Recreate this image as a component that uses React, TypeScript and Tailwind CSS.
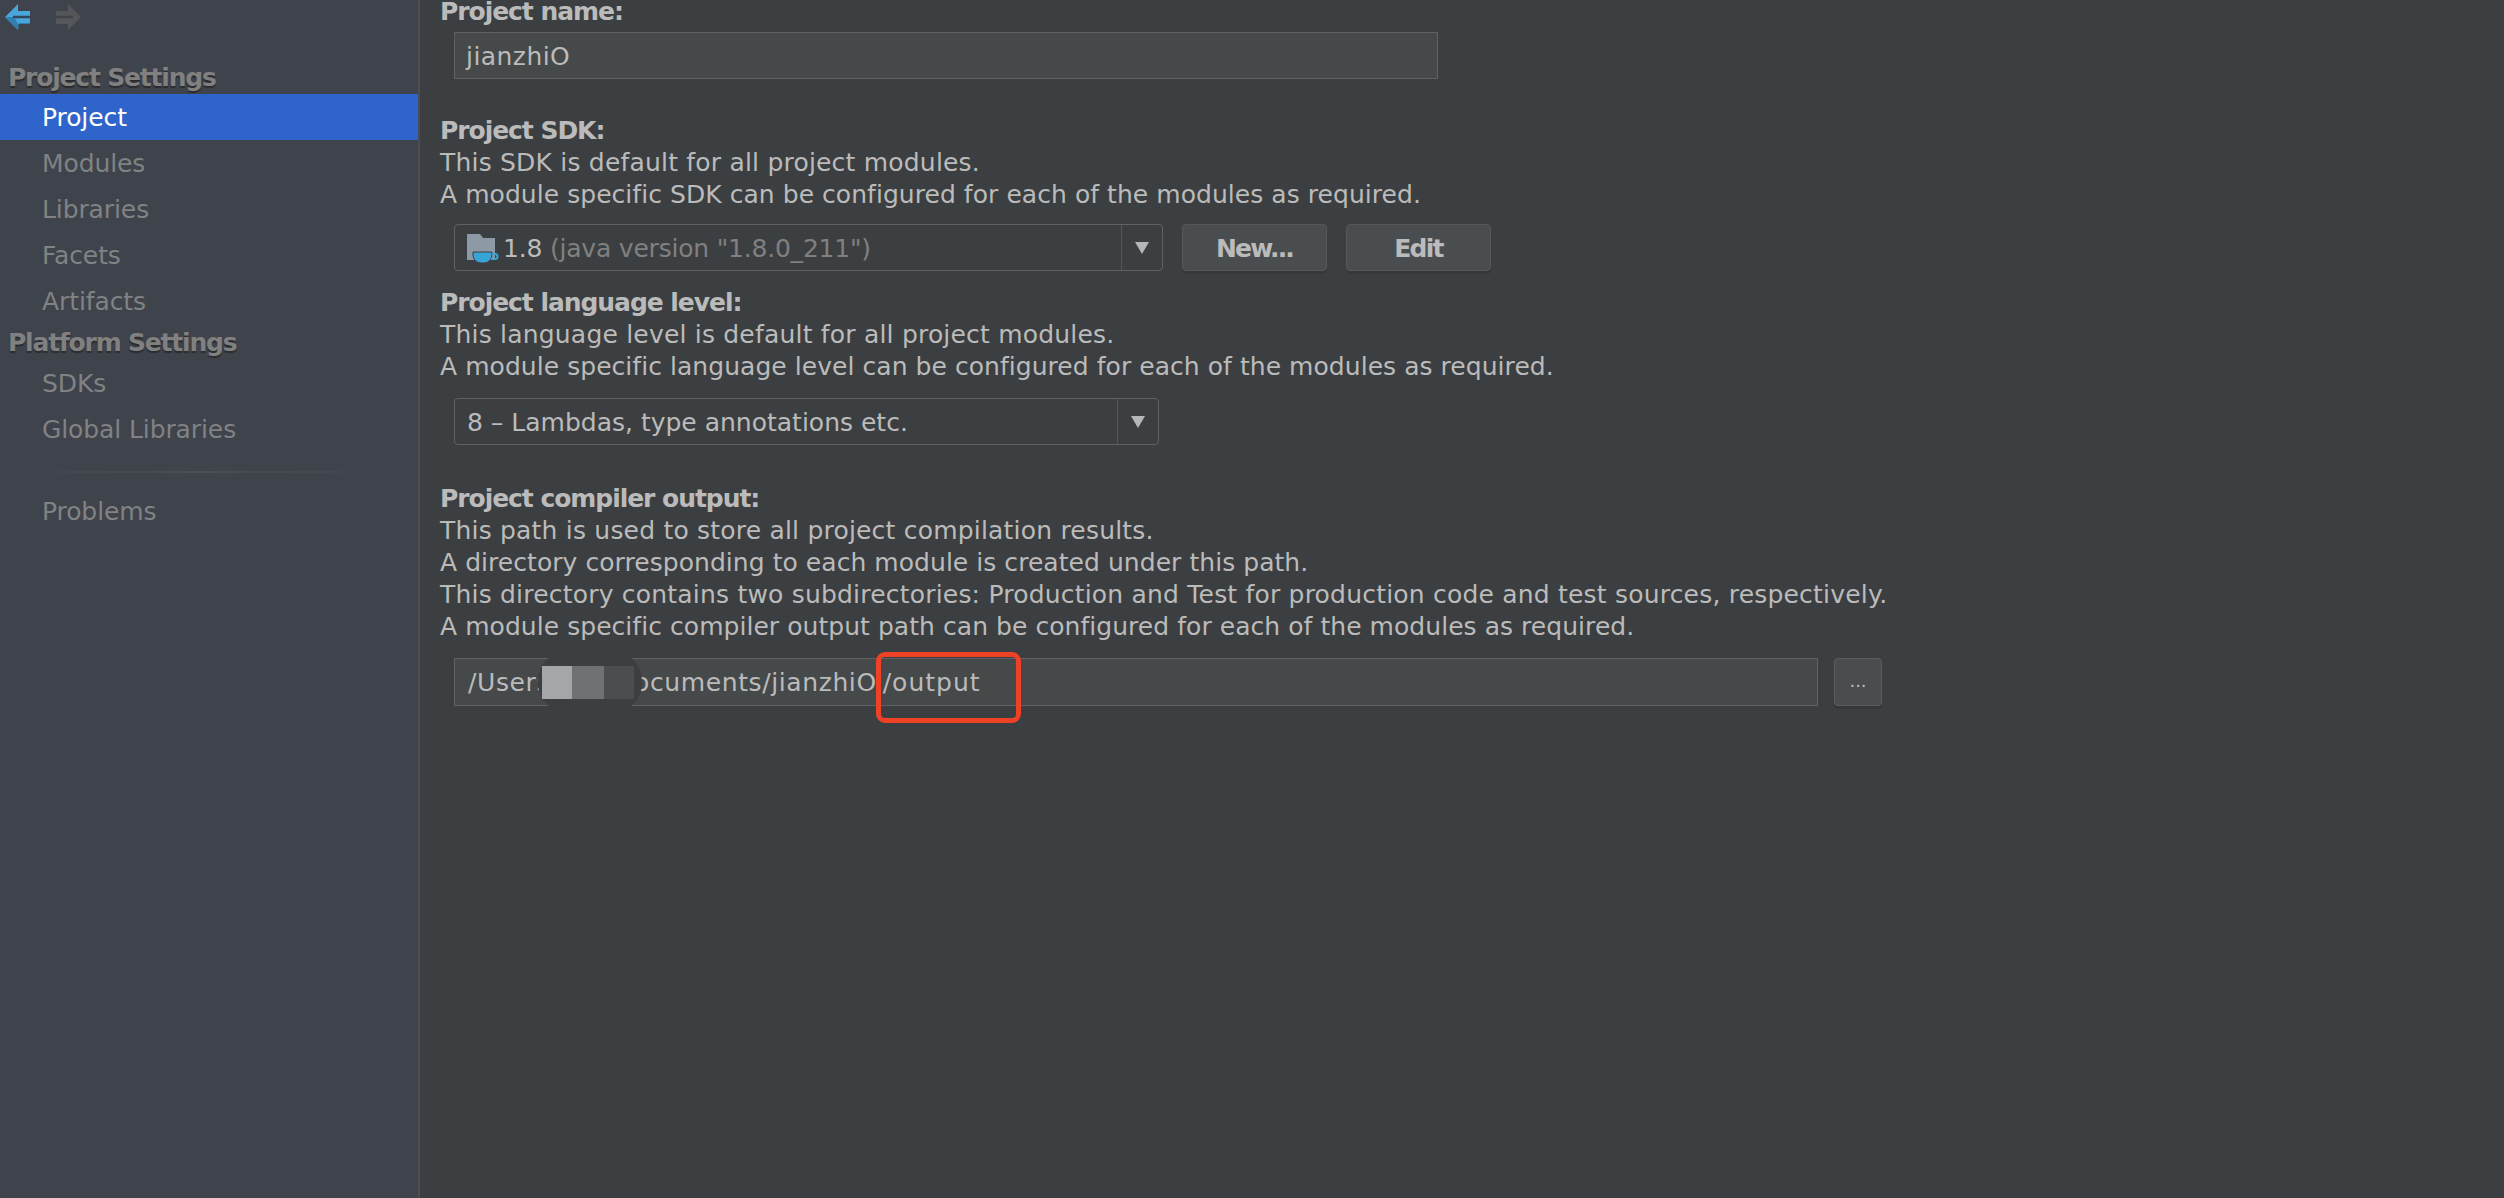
const SIDE_FONT = "font-['DejaVu_Sans',sans-serif]"

function SectionTitle({ title, className }: { title: string; className: string }) {
  return (
    <div className={`flex items-center pl-[8px] pt-0.5 text-[25px] font-bold tracking-[-1.2px] text-[#808080] [text-shadow:0_2px_1px_#2a2c30] ${className}`}>
      {title}
    </div>
  )
}

function NavItem({ label, selected }: { label: string; selected?: boolean }) {
  return (
    <div className={`flex h-[46px] items-center pl-[42px] pt-0.5 text-[25px] tracking-[-0.1px] ${selected ? 'bg-[#2f65ca] text-white' : 'text-[#808284]'}`}>
      {label}
    </div>
  )
}

function Label({ children }: { children: string }) {
  return <div className="h-8 text-[25px] font-bold leading-8 tracking-[-1.05px] text-[#bbbbbb]">{children}</div>
}

function Line({ children, tight }: { children: string; tight?: boolean }) {
  return (
    <div className={`h-8 text-[25px] leading-8 text-[#bbbbbb] ${tight ? 'tracking-[0.05px]' : 'tracking-[0.2px]'}`}>
      {children}
    </div>
  )
}

function ComboArrow() {
  return (
    <div className="flex h-full w-[41px] items-center justify-center border-l border-[#55585a]">
      <svg width="16" height="14" viewBox="0 0 16 14">
        <path d="M1 1h14L8 13z" fill="#b4b6b8" />
      </svg>
    </div>
  )
}

function Button({ label, className }: { label: string; className: string }) {
  return (
    <div className={`flex h-[47px] items-center justify-center rounded-[4px] border border-[#55585a] bg-[#4a4d4f] pt-0.5 text-[25px] font-bold tracking-[-1.8px] text-[#bbbbbb] shadow-[0_3px_0_#36383a] ${className}`}>
      {label}
    </div>
  )
}

function JdkIcon() {
  return (
    <svg width="32" height="30" viewBox="0 0 32 30" className="shrink-0">
      <path d="M0 0h13l3 4h12v22H0z" fill="#8d9aa5" />
      <path d="M6 18h19v3a8 8 0 0 1-8 8h-3a8 8 0 0 1-8-8z" fill="#37a5d6" stroke="#3c3f41" strokeWidth="1" />
      <path d="M25 20h3a2.500 2.500 0 0 1 0 5h-4" fill="none" stroke="#37a5d6" strokeWidth="2" />
    </svg>
  )
}

export default function App() {
  return (
    <div className={`flex h-[1198px] w-[2504px] overflow-hidden bg-[#3c3f41] ${SIDE_FONT}`}>
      <aside className="flex w-[420px] shrink-0 flex-col border-r-2 border-[#4c4d50] bg-[#3f434b]">
        <div className="flex h-[60px] gap-[26px] pl-[5px] pt-1">
          <svg width="25" height="26" viewBox="0 0 25 26">
            <path d="M13 0 0 13l13 13v-6h12V7H13z" fill="#4aa5da" />
            <path d="M13 26 0 13h9l4 7h12v-1H14z" fill="#2f7fb0" />
            <path d="M8 13h17" stroke="#33475a" strokeWidth="2.500" />
          </svg>
          <svg width="25" height="26" viewBox="0 0 25 26">
            <path d="M12 0 25 13 12 26v-6H0V7h12z" fill="#55565a" />
            <path d="M0 13h17" stroke="#404349" strokeWidth="2.500" />
          </svg>
        </div>
        <SectionTitle title="Project Settings" className="h-[34px]" />
        <NavItem label="Project" selected />
        <NavItem label="Modules" />
        <NavItem label="Libraries" />
        <NavItem label="Facets" />
        <NavItem label="Artifacts" />
        <SectionTitle title="Platform Settings" className="h-[36px]" />
        <NavItem label="SDKs" />
        <NavItem label="Global Libraries" />
        <div className="mt-[19px] h-0.5 w-[400px] bg-gradient-to-r from-[#3f434b] via-[#4d4e50] to-[#3f434b]" />
        <div className="mt-[15px]">
          <NavItem label="Problems" />
        </div>
      </aside>

      <main className="-mt-1 min-w-0 flex-1 pl-[20px]">
        <Label>Project name:</Label>
        <div className="ml-[14px] mt-[4px] flex h-[47px] w-[984px] items-center border border-[#5f6163] bg-[#45494a] pl-[11px] pt-0.5 text-[25px] tracking-[0.45px] text-[#bbbbbb]">
          jianzhiO
        </div>

        <div className="mt-[36px]">
          <Label>Project SDK:</Label>
          <Line>This SDK is default for all project modules.</Line>
          <Line tight>A module specific SDK can be configured for each of the modules as required.</Line>
        </div>
        <div className="ml-[14px] mt-[13px] flex items-center gap-[19px]">
          <div className="flex h-[47px] w-[709px] items-center rounded-[4px] border border-[#5f6163]">
            <div className="flex min-w-0 flex-1 items-center gap-[4px] pl-[12px] pt-0.5 text-[25px] tracking-[-0.2px] text-[#bbbbbb]">
              <JdkIcon />
              <span>
                1.8 <span className="text-[#808080]">(java version "1.8.0_211")</span>
              </span>
            </div>
            <ComboArrow />
          </div>
          <Button label="New..." className="w-[145px]" />
          <Button label="Edit" className="w-[145px]" />
        </div>

        <div className="mt-[16px]">
          <Label>Project language level:</Label>
          <Line>This language level is default for all project modules.</Line>
          <Line tight>A module specific language level can be configured for each of the modules as required.</Line>
        </div>
        <div className="ml-[14px] mt-[15px] flex h-[47px] w-[705px] items-center rounded-[4px] border border-[#5f6163]">
          <div className="min-w-0 flex-1 pl-[12px] pt-0.5 text-[25px] tracking-[0px] text-[#bbbbbb]">8 – Lambdas, type annotations etc.</div>
          <ComboArrow />
        </div>

        <div className="mt-[38px]">
          <Label>Project compiler output:</Label>
          <Line>This path is used to store all project compilation results.</Line>
          <Line tight>A directory corresponding to each module is created under this path.</Line>
          <Line>This directory contains two subdirectories: Production and Test for production code and test sources, respectively.</Line>
          <Line tight>A module specific compiler output path can be configured for each of the modules as required.</Line>
        </div>
        <div className="ml-[14px] mt-[15px] flex items-start gap-4">
          <div className="relative flex h-[48px] w-[1364px] items-center border border-[#5f6163] bg-[#45494a] pl-[13px] pt-0.5 text-[25px] tracking-[0.6px] text-[#bbbbbb]">
            <span>
              /Users/xxx/Documents/jianzhiO<span className="ml-[6px] tracking-[1px]">/output</span>
            </span>
            {/* redacted part of the path */}
            <div className="absolute left-[83px] top-[-8px] flex h-[62px] w-[104px] items-center rounded-[30px] bg-[#3c3f41] pl-[4px]">
              <div className="h-[33px] w-[30px] bg-[#a5a6a8]" />
              <div className="h-[33px] w-[32px] bg-[#6f7273]" />
              <div className="h-[33px] w-[30px] bg-[#4b4d4f]" />
            </div>
            {/* annotation box */}
            <div className="absolute left-[421px] top-[-7px] h-[71px] w-[145px] rounded-[9px] border-[5px] border-[#ee4125]" />
          </div>
          <div className="flex h-[48px] w-[48px] items-center justify-center rounded-[4px] border border-[#5a5d5f] bg-[#4a4d4f] pb-1 text-[18px] text-[#bbbbbb] shadow-[0_3px_0_#36383a]">
            ...
          </div>
        </div>
      </main>
    </div>
  )
}
